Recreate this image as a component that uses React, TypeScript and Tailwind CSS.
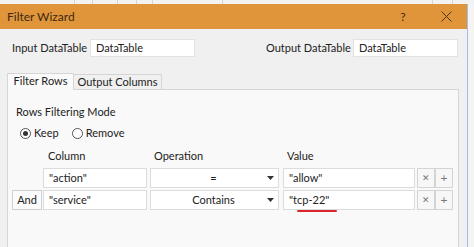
const font = { fontFamily: 'Lato, "Noto Sans", Arial, sans-serif' };

const Radio = ({ checked, label }: { checked?: boolean; label: string }) => (
  <label className="flex items-center gap-[3px]">
    <span className="w-[11px] h-[11px] rounded-full border border-[#555] bg-white flex items-center justify-center">
      {checked && <span className="w-[5px] h-[5px] rounded-full bg-[#333]" />}
    </span>
    <span>{label}</span>
  </label>
);

const Box = ({ w, text, center, combo }: { w: string; text: string; center?: boolean; combo?: boolean }) => (
  <div className={`${w} h-[20px] bg-white border border-[#dcdcdc] flex items-center pl-[5px] pr-[4px]`}>
    <span className={center ? "flex-1 text-center pl-[4px]" : "flex-1"}>{text}</span>
    {combo && (
      <svg width="7" height="4" viewBox="0 0 7 4" className="shrink-0">
        <path d="M0 0 L7 0 L3.5 4 Z" fill="#333" />
      </svg>
    )}
  </div>
);

const SmallBtn = ({ children }: { children: React.ReactNode }) => (
  <div className="w-[18px] h-[20px] border border-[#d4d4d4] bg-[#f7f7f7] flex items-center justify-center text-[#777] text-[9px]">
    {children}
  </div>
);

const Row = ({ and, col, op, val, underline }: { and?: boolean; col: string; op: string; val: string; underline?: boolean }) => (
  <div className="flex items-center h-[20px]">
    {and ? (
      <div className="w-[30px] h-[20px] border border-[#d0d0d0] bg-[#fbfbfb] flex items-center justify-center mr-[1px]">And</div>
    ) : (
      <div className="w-[31px]" />
    )}
    <Box w="w-[104px]" text={col} />
    <div className="w-[3px]" />
    <Box w="w-[129px]" text={op} center combo />
    <div className="w-[4px]" />
    <div className="relative">
      <Box w="w-[132px]" text={val} />
      {underline && <div className="absolute left-[14px] top-[20px] w-[40px] h-[2px] bg-[#d8262c] rounded" />}
    </div>
    <div className="w-[2px]" />
    <SmallBtn>✕</SmallBtn>
    <SmallBtn>
      <span className="text-[12px]">+</span>
    </SmallBtn>
  </div>
);

export default function App() {
  return (
    <div className="w-[474px] h-[247px] overflow-hidden bg-[#f4f4f4] text-[11px] text-[#222] whitespace-nowrap" style={font}>
      <div className="h-[4px] flex bg-[#f2f2f2]">
        <div className="w-[75px] border-r border-[#d6d6d6]" />
        <div className="w-[18px] border-r border-[#d6d6d6]" />
        <div className="w-[25px] border-r border-[#d6d6d6]" />
        <div className="w-[19px] border-r border-[#d6d6d6]" />
        <div className="w-[16px] border-r border-[#d6d6d6]" />
        <div className="w-[70px] border-r border-[#d6d6d6]" />
        <div className="w-[210px] border-r border-[#d6d6d6]" />
        <div className="w-[20px] border-r border-[#d6d6d6]" />
      </div>
      <div className="w-[468px] h-[243px] border-r border-[#9cc0e4] flex flex-col">
        <div className="h-[25px] bg-[#e1953b] flex items-center pl-[7px] text-[#3b2a12] text-[12px]">
          <span className="flex-1">Filter Wizard</span>
          <span className="w-[12px] text-center">?</span>
          <span className="w-[32px]" />
          <svg width="11" height="11" viewBox="0 0 11 11" className="mr-[15px]">
            <path d="M0.5 0.5 L10.5 10.5 M10.5 0.5 L0.5 10.5" stroke="#4a3313" strokeWidth="1" />
          </svg>
        </div>
        <div className="flex-1 bg-[#f0f0f0] flex flex-col">
          <div className="flex items-center h-[18px] mt-[10px] pl-[12px]">
            <span className="w-[78px]">Input DataTable</span>
            <div className="w-[105px] h-[18px] bg-white border border-[#e2e2e2] flex items-center pl-[5px]">DataTable</div>
            <span className="ml-[71px] w-[87px]">Output DataTable</span>
            <div className="w-[105px] h-[18px] bg-white border border-[#e2e2e2] flex items-center pl-[5px]">DataTable</div>
          </div>
          <div className="flex items-end h-[17px] mt-[15px] pl-[7px]">
            <div className="w-[67px] h-[17px] bg-[#fafafa] border border-b-0 border-[#d5d5d5] flex items-center justify-center relative z-10 -mb-px pb-px">
              Filter Rows
            </div>
            <div className="w-[88px] h-[15px] bg-[#f0f0f0] border border-l-0 border-b-0 border-[#d5d5d5] flex items-center justify-center">
              Output Columns
            </div>
          </div>
          <div className="ml-[7px] w-[452px] flex-1 bg-[#f9f9f9] border border-b-0 border-[#d5d5d5] pt-[14px] pl-[4px]">
            <div className="pl-[4px] h-[16px] flex items-center">Rows Filtering Mode</div>
            <div className="flex items-center gap-[13px] h-[16px] mt-[5px] pl-[8px]">
              <Radio checked label="Keep" />
              <Radio label="Remove" />
            </div>
            <div className="flex items-center h-[16px] mt-[7px]">
              <span className="w-[36px]" />
              <span className="w-[106px]">Column</span>
              <span className="w-[133px]">Operation</span>
              <span>Value</span>
            </div>
            <div className="flex flex-col gap-[2px] mt-[4px]">
              <Row col={'"action"'} op="=" val={'"allow"'} />
              <Row and col={'"service"'} op="Contains" val={'"tcp-22"'} underline />
            </div>
          </div>
        </div>
      </div>
    </div>
  );
}
